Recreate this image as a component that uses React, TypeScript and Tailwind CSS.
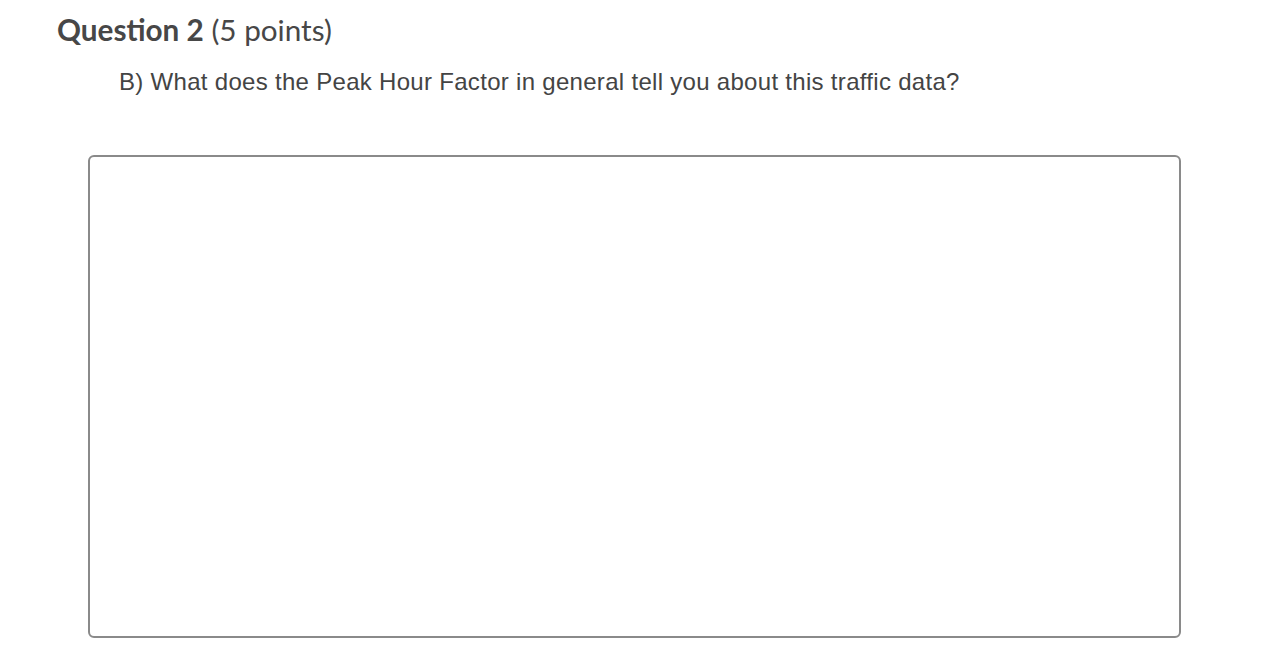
export default function App() {
  return (
    <div className="min-h-[660px] w-[1284px] bg-white">
      <div className="pl-[57px] pt-[12px]">
        <h2 className="font-['Lato',sans-serif] text-[29.7px] leading-[36px] text-[#474747]">
          <span className="font-bold">Question 2</span> (5 points)
        </h2>
      </div>
      <p className="mt-[20px] pl-[119px] font-['Liberation_Sans',Arial,sans-serif] text-[24px] leading-[28px] tracking-[0.3px] text-[#444]">
        B) What does the Peak Hour Factor in general tell you about this traffic data?
      </p>
      <div className="ml-[88px] mt-[59px] h-[483px] w-[1093px] rounded-[6px] border-2 border-[#8a8a8a] bg-white" />
    </div>
  );
}
